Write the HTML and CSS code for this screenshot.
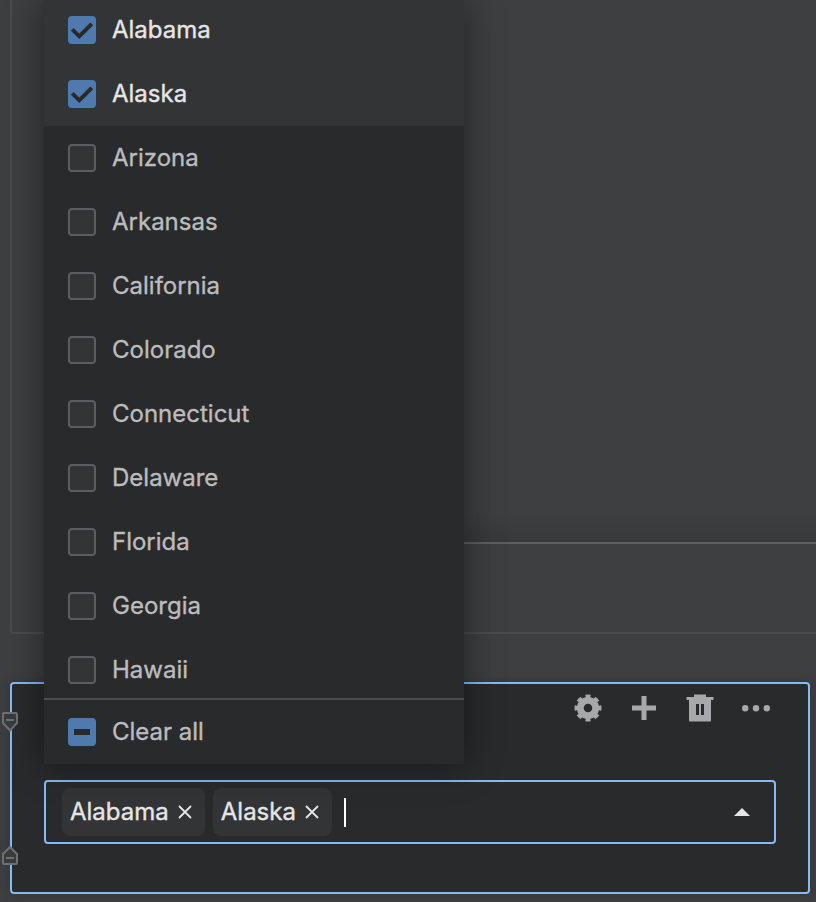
FILE: index.html
```html
<!DOCTYPE html>
<html lang="en">
<head>
  <meta charset="UTF-8" />
  <meta name="viewport" content="width=device-width, initial-scale=1.0"/>
  <title>States</title>
  <link rel="stylesheet" href="styles.css">
</head>
<body>

  <div class="panel">
    <div class="panel-body"></div>
    <div class="panel-footer"></div>
  </div>

  <div class="cell">
    <svg class="fold fold-top" width="18" height="22" viewBox="0 0 18 22">
      <path d="M3 2H15Q16 2 16 3V12L9 19.5L2 12V3Q2 2 3 2Z"/>
      <path d="M5 9H13"/>
    </svg>
    <svg class="fold fold-bottom" width="18" height="22" viewBox="0 0 18 22">
      <path d="M9 2L16 9V18Q16 19 15 19H3Q2 19 2 18V9Z"/>
      <path d="M5 13H13"/>
    </svg>

    <div class="toolbar">
      <svg class="gear" width="28" height="28" viewBox="0 0 28 28">
        <circle cx="14" cy="14" r="7.7" stroke-width="6.8"/>
        <circle cx="14" cy="14" r="11.9" stroke-width="3.2" pathLength="80" stroke-dasharray="5.4 4.6" stroke-dashoffset="2.7"/>
      </svg>
      <svg width="28" height="28" viewBox="0 0 28 28">
        <path d="M11.5 2H16.5V11.5H26V16.5H16.5V26H11.5V16.5H2V11.5H11.5Z"/>
      </svg>
      <svg width="28" height="28" viewBox="0 0 28 28">
        <path fill-rule="evenodd" d="M8 .5H20V3H27.5V6H25V26.5Q25 27.5 24 27.5H4Q3 27.5 3 26.5V6H.5V3H8ZM10 10V21H13V10ZM15 10V21H18V10Z"/>
      </svg>
      <svg width="28" height="28" viewBox="0 0 28 28">
        <circle cx="3.2" cy="14.3" r="3.2"/>
        <circle cx="14" cy="14.3" r="3.2"/>
        <circle cx="24.8" cy="14.3" r="3.2"/>
      </svg>
    </div>

    <div class="select">
      <div class="chip">
        <span>Alabama</span>
        <svg width="14" height="14" viewBox="0 0 14 14"><path d="M1 1L13 13M13 1L1 13"/></svg>
      </div>
      <div class="chip">
        <span>Alaska</span>
        <svg width="14" height="14" viewBox="0 0 14 14"><path d="M1 1L13 13M13 1L1 13"/></svg>
      </div>
      <div class="caret"></div>
      <svg class="arrow" width="16" height="8" viewBox="0 0 16 8"><path d="M0 8L8 0L16 8Z"/></svg>

      <div class="dropdown">
        <div class="options">
          <div class="option selected">
            <div class="checkbox checked"><svg width="28" height="28" viewBox="0 0 28 28"><path d="M4.2 13.3L11.3 20.3L23.8 7.8"/></svg></div>
            <span>Alabama</span>
          </div>
          <div class="option selected">
            <div class="checkbox checked"><svg width="28" height="28" viewBox="0 0 28 28"><path d="M4.2 13.3L11.3 20.3L23.8 7.8"/></svg></div>
            <span>Alaska</span>
          </div>
          <div class="option"><div class="checkbox"></div><span>Arizona</span></div>
          <div class="option"><div class="checkbox"></div><span>Arkansas</span></div>
          <div class="option"><div class="checkbox"></div><span>California</span></div>
          <div class="option"><div class="checkbox"></div><span>Colorado</span></div>
          <div class="option"><div class="checkbox"></div><span>Connecticut</span></div>
          <div class="option"><div class="checkbox"></div><span>Delaware</span></div>
          <div class="option"><div class="checkbox"></div><span>Florida</span></div>
          <div class="option"><div class="checkbox"></div><span>Georgia</span></div>
          <div class="option"><div class="checkbox"></div><span>Hawaii</span></div>
        </div>
        <div class="option clear-all">
          <div class="checkbox checked"><div class="minus"></div></div>
          <span>Clear all</span>
        </div>
      </div>
    </div>
  </div>

</body>
</html>
```

FILE: styles.css
```css
* {
  margin: 0;
  padding: 0;
  box-sizing: border-box;
}

body {
  height: 902px;
  padding-left: 10px;
  overflow: hidden;
  background: #3e3f41;
  color: #bcbcbe;
  font-family: Inter, sans-serif;
  font-size: 24px;
  line-height: 32px;
  -webkit-text-stroke: 0.35px currentColor;
}

svg {
  display: block;
  flex-shrink: 0;
}

/* Cell above, only its lower left part is visible */
.panel {
  height: 634px;
  border-left: 2px solid #4a4b4e;
  border-bottom: 2px solid #4a4b4e;
  border-bottom-left-radius: 4px;
}

.panel-body {
  height: 544px;
  margin-left: 60px;
  border-bottom: 2px solid #5d5e62;
  background: linear-gradient(to bottom, rgba(0, 0, 0, 0) 510px, rgba(0, 0, 0, 0.1) 542px);
}

/* Active cell */
.cell {
  position: relative;
  width: 800px;
  height: 212px;
  margin-top: 48px;
  padding: 10px 32px 0;
  border: 2px solid #87b9f2;
  border-radius: 4px;
  background: #292a2c;
  box-shadow: 0 0 12px rgba(0, 0, 0, 0.2);
}

.fold {
  position: absolute;
  left: -11px;
  fill: #3a3b3d;
  stroke: #6f7075;
  stroke-width: 2;
}

.fold-top {
  top: 27px;
}

.fold-bottom {
  top: 161px;
}

.toolbar {
  display: flex;
  justify-content: flex-end;
  gap: 28px;
  padding-right: 6px;
  fill: #a7a8ab;
}

.gear {
  fill: none;
  stroke: #a7a8ab;
}

.select {
  position: relative;
  display: flex;
  align-items: center;
  gap: 8px;
  height: 64px;
  margin-top: 58px;
  padding: 0 24px 0 16px;
  border: 2px solid #87b9f2;
  border-radius: 4px;
}

.chip {
  display: flex;
  align-items: center;
  gap: 9px;
  height: 48px;
  padding: 0 13px 0 8px;
  border-radius: 8px;
  background: #333436;
  color: #e6e6e7;
}

.chip svg {
  stroke: #e6e6e7;
  stroke-width: 1.8;
}

.caret {
  width: 2px;
  height: 29px;
  margin-left: 4px;
  background: #ffffff;
}

.arrow {
  margin-left: auto;
  fill: #e6e6e7;
}

/* Opens upwards from the select */
.dropdown {
  position: absolute;
  left: -2px;
  bottom: 78px;
  width: 420px;
  background: #292a2c;
  box-shadow: 0 0 36px rgba(0, 0, 0, 0.45);
}

.options {
  height: 700px;
  overflow: hidden;
}

.option {
  display: flex;
  align-items: center;
  gap: 16px;
  height: 64px;
  padding-left: 24px;
}

.selected {
  background: #333436;
  color: #e6e6e7;
}

.checkbox {
  width: 28px;
  height: 28px;
  border: 2px solid #5c5d62;
  border-radius: 4px;
  background: #333436;
}

.checked {
  display: flex;
  align-items: center;
  justify-content: center;
  border: none;
  background: #4f7ab0;
}

.checked svg {
  fill: none;
  stroke: #292a2c;
  stroke-width: 4;
}

.minus {
  width: 16px;
  height: 6px;
  background: #292a2c;
}

.clear-all {
  height: 66px;
  border-top: 2px solid #4c4d50;
}
```
